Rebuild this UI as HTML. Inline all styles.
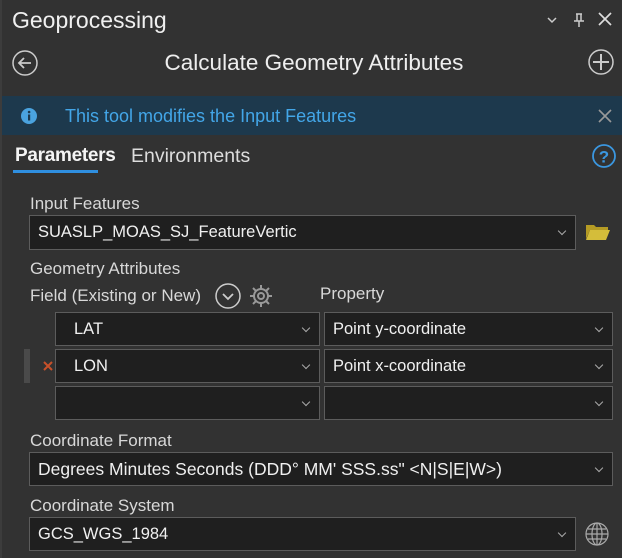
<!DOCTYPE html>
<html><head><style>
body{margin:0;width:622px;height:558px;background:#323232;font-family:"Liberation Sans",sans-serif;color:#e6e6e6;position:relative;overflow:hidden}
.a{position:absolute;white-space:nowrap}
.box{position:absolute;background:#1f1f1f;border:1px solid #5c5c5c;box-sizing:border-box;font-size:16.5px;color:#f0f0f0;line-height:33px;padding-left:8px}
.box:after{content:"";position:absolute;right:10px;top:12px;width:5px;height:5px;border-right:1.5px solid #aaa;border-bottom:1.5px solid #aaa;transform:rotate(45deg)}
.lbl{position:absolute;font-size:17px;color:#d8d8d8}
</style></head><body>
<div style="position:absolute;left:0;top:0;width:2px;height:558px;background:#3c3c3c"></div>
<div class="a" style="left:12px;top:7px;font-size:23px;color:#f0f0f0">Geoprocessing</div>
<svg class="a" style="left:540px;top:10px" width="80" height="20"><path d="M8 8l4 4 4-4" stroke="#ccc" stroke-width="1.5" fill="none"/><path d="M36 4h6M37 4v7h4v-7M34 11h10M39 11v6" stroke="#ccc" stroke-width="1.5" fill="none"/><path d="M59 3l12 12M71 3l-12 12" stroke="#ddd" stroke-width="1.7"/></svg>
<svg class="a" style="left:11px;top:49px" width="28" height="28"><circle cx="14" cy="14" r="12" stroke="#ccc" stroke-width="1.5" fill="none"/><path d="M20 14H8M13 9l-5 5 5 5" stroke="#ccc" stroke-width="1.8" fill="none"/></svg>
<div class="a" style="left:0;width:628px;text-align:center;top:50px;font-size:22.5px;color:#eee">Calculate Geometry Attributes</div>
<svg class="a" style="left:587px;top:48px" width="28" height="28"><circle cx="14" cy="14" r="12" stroke="#ccc" stroke-width="1.5" fill="none"/><path d="M14 6v16M6 14h16" stroke="#ccc" stroke-width="2"/></svg>
<div class="a" style="left:2px;top:96px;width:620px;height:39px;background:#1d394d"></div>
<svg class="a" style="left:20px;top:107px" width="18" height="18"><circle cx="9" cy="9" r="8" fill="#4aa3df"/><rect x="8" y="7.5" width="2.2" height="6" fill="#1d394d"/><circle cx="9.1" cy="5" r="1.3" fill="#1d394d"/></svg>
<div class="a" style="left:65px;top:106px;font-size:18px;color:#43a6e8">This tool modifies the Input Features</div>
<svg class="a" style="left:598px;top:109px" width="14" height="14"><path d="M1 1l12 12M13 1L1 13" stroke="#999" stroke-width="1.6"/></svg>
<div class="a" style="left:15px;top:145px;font-size:19px;color:#f4f4f4;font-weight:bold;letter-spacing:-0.3px">Parameters</div>
<div class="a" style="left:13px;top:170px;width:85px;height:3px;background:#2f8fe0"></div>
<div class="a" style="left:131px;top:145px;font-size:19.5px;color:#ddd">Environments</div>
<svg class="a" style="left:592px;top:144px" width="24" height="24"><circle cx="12" cy="12" r="11" stroke="#3b97e0" stroke-width="1.8" fill="none"/><text x="12" y="18.5" text-anchor="middle" font-size="17" font-family="Liberation Sans" fill="#3b97e0" font-weight="bold">?</text></svg>
<div class="lbl" style="left:30px;top:194px">Input Features</div>
<div class="box" style="left:29px;top:215px;width:547px;height:35px">SUASLP_MOAS_SJ_FeatureVertic</div>
<svg class="a" style="left:584px;top:222px" width="28" height="20"><path d="M2 3h8l2 2h12v3H6L2 17z" fill="#b59b24"/><path d="M6 8h20l-4 10H2z" fill="#d4bd3a"/></svg>
<div class="lbl" style="left:30px;top:259px">Geometry Attributes</div>
<div class="lbl" style="left:30px;top:286px">Field (Existing or New)</div>
<svg class="a" style="left:214px;top:282px" width="62" height="28"><circle cx="14" cy="14" r="12" stroke="#ccc" stroke-width="1.5" fill="none"/><path d="M9 12l5 5 5-5" stroke="#ccc" stroke-width="1.8" fill="none"/><g transform="translate(47,14)" fill="none" stroke="#999" stroke-width="2"><circle r="7"/><circle r="3"/><path d="M0-11v4M0 7v4M-11 0h4M7 0h4M-8-8l3 3M5 5l3 3M8-8l-3 3M-5 5l-3 3"/></g></svg>
<div class="lbl" style="left:320px;top:284px">Property</div>
<div class="box" style="left:55px;top:312px;width:265px;height:34px;padding-left:18px">LAT</div>
<div class="box" style="left:324px;top:312px;width:289px;height:34px">Point y-coordinate</div>
<div class="a" style="left:24px;top:349px;width:6px;height:34px;background:#4a4a4a"></div>
<svg class="a" style="left:43px;top:361px" width="10" height="10"><path d="M1 1l8 8M9 1L1 9" stroke="#c8502a" stroke-width="2"/></svg>
<div class="box" style="left:55px;top:349px;width:265px;height:34px;padding-left:18px">LON</div>
<div class="box" style="left:324px;top:349px;width:289px;height:34px">Point x-coordinate</div>
<div class="box" style="left:55px;top:386px;width:265px;height:34px"></div>
<div class="box" style="left:324px;top:386px;width:289px;height:34px"></div>
<div class="lbl" style="left:30px;top:431px">Coordinate Format</div>
<div class="box" style="left:29px;top:452px;width:584px;height:34px;font-size:17.5px">Degrees Minutes Seconds (DDD° MM' SSS.ss" &lt;N|S|E|W&gt;)</div>
<div class="lbl" style="left:30px;top:496px">Coordinate System</div>
<div class="box" style="left:29px;top:517px;width:547px;height:34px">GCS_WGS_1984</div>
<svg class="a" style="left:584px;top:521px" width="26" height="26"><g fill="none" stroke="#aaa" stroke-width="1.2"><circle cx="13" cy="13" r="11"/><ellipse cx="13" cy="13" rx="5" ry="11"/><path d="M13 2v22M2 13h22M4 8h18M4 18h18"/></g></svg>
</body></html>
